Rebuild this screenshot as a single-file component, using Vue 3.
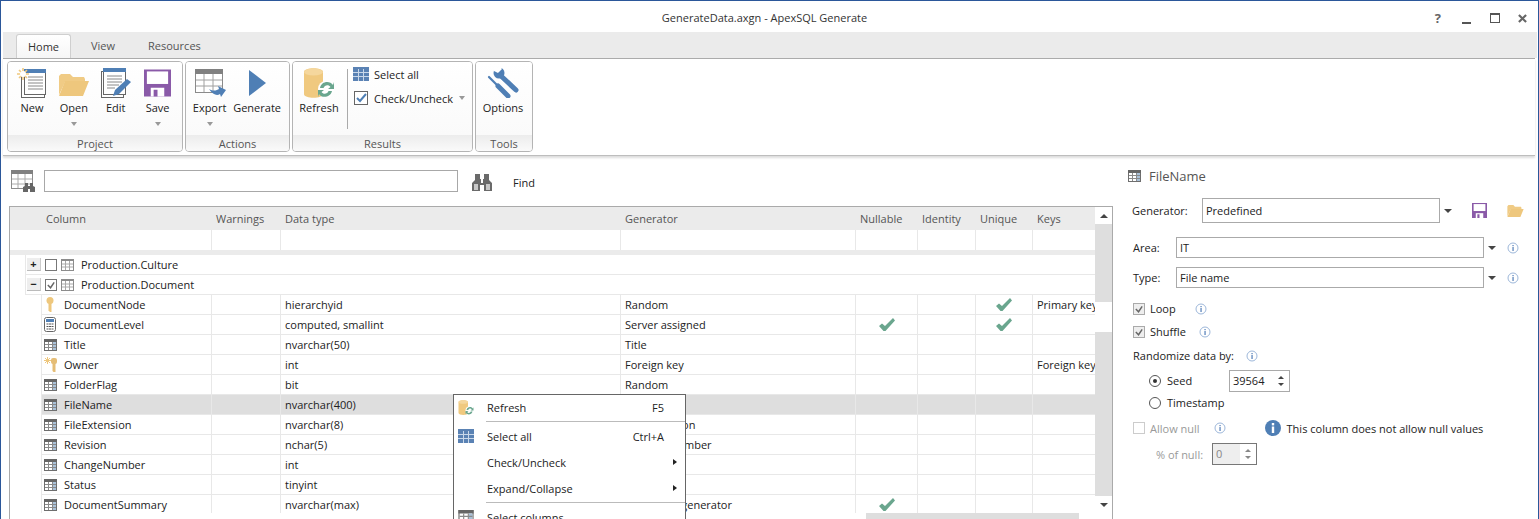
<template>
  <div class="window">
    <svg class="defs" width="0" height="0">
      <defs>
        <symbol id="tbl" viewBox="0 0 13 12">
          <rect x="0.5" y="0.5" width="12" height="11" fill="#fff" stroke="#6e6e6e"/>
          <rect x="0" y="0" width="13" height="3" fill="#666"/>
          <rect x="9" y="3" width="3" height="8" fill="#a9c1d9"/>
          <path d="M4.500 3v8M8.500 3v8M1 5.500h11M1 8.500h11" stroke="#8a8a8a" fill="none"/>
        </symbol>
        <symbol id="tbl-light" viewBox="0 0 13 12">
          <rect x="0.5" y="0.5" width="12" height="11" fill="#fff" stroke="#8c8c8c"/>
          <rect x="0" y="0" width="13" height="2" fill="#8c8c8c"/>
          <path d="M4.500 2v9M8.500 2v9M1 5h11M1 8h11" stroke="#a8a8a8" fill="none"/>
        </symbol>
        <symbol id="check" viewBox="0 0 16 13">
          <polygon points="0,8 3,5.500 6,8 14,0 16,2.500 6.500,13 4.500,13" fill="#6aa68e"/>
        </symbol>
        <symbol id="info" viewBox="0 0 12 12">
          <circle cx="6" cy="6" r="5" fill="#fff" stroke="#9db7da"/>
          <rect x="5.400" y="5" width="1.300" height="4" fill="#5f86bd"/>
          <rect x="5.400" y="3" width="1.300" height="1.200" fill="#5f86bd"/>
        </symbol>
        <symbol id="save" viewBox="0 0 28 28">
          <rect width="28" height="28" fill="#8a5aa8"/>
          <rect x="3" y="2" width="22" height="13" fill="#fff"/>
          <path d="M7 28v-9h14v9z" fill="#fff"/>
          <rect x="10" y="21" width="4" height="7" fill="#8a5aa8"/>
        </symbol>
        <symbol id="folder" viewBox="0 0 30 24">
          <path d="M0 23V4l2-2h9l3 3h11l1 2v3H6z" fill="#f0cb85"/>
          <path d="M0 24 6 9h24l-6 15z" fill="#eec77d"/>
        </symbol>
        <symbol id="grid-blue" viewBox="0 0 16 14">
          <rect width="16" height="14" fill="#5a82b4"/>
          <path d="M5.500 2v12M10.500 2v12M0 5.500h16M0 9.500h16" stroke="#c9d8ea" fill="none"/>
        </symbol>
        <symbol id="refresh" viewBox="0 0 30 30">
          <path d="M0 4c0-5 19-5 19 0v22c0 5-19 5-19 0z" fill="#f0c97f"/>
          <ellipse cx="9.500" cy="4" rx="9.500" ry="3.500" fill="#f5d79d"/>
          <circle cx="22" cy="21" r="8" fill="#fff"/>
          <path d="M16 20c1-7 10-8 13-3l1-3v7h-6l2.500-2c-2-3-6-2-7 1zM28 23c-1 6-10 8-13 3l-1 3v-7h6l-2.500 2c2 3 6 2 7-1z" fill="#6aa68e"/>
        </symbol>
      </defs>
    </svg>

    <div class="titlebar">
      <span class="title">GenerateData.axgn - ApexSQL Generate</span>
      <div class="win-buttons">
        <span class="win-help">?</span>
        <span class="win-min"></span>
        <span class="win-max"></span>
        <svg class="win-close" width="9" height="9" viewBox="0 0 10 10"><path d="M1 1l8 8M9 1l-8 8" stroke="#666" stroke-width="2.400"/></svg>
      </div>
    </div>

    <div class="tabs">
      <span class="tab active">Home</span>
      <span class="tab">View</span>
      <span class="tab">Resources</span>
    </div>

    <div class="ribbon">
      <div class="group project">
        <div class="group-body">
          <div class="rbtn">
            <svg class="ricon" width="30" height="30" viewBox="0 0 30 30">
              <rect x="4.500" y="6.500" width="23" height="23" fill="#fff" stroke="#666"/>
              <rect x="7.500" y="1.500" width="21" height="25" fill="#fff" stroke="#666"/>
              <rect x="7" y="1" width="22" height="4" fill="#4f7fb5"/>
              <path d="M11 9h15M11 12h15M11 15h15M11 18h15M11 21h15" stroke="#888"/>
              <g stroke="#f0c97f" stroke-width="1.600"><path d="M6 0v12M0 6h12M2 2l8 8M10 2l-8 8"/></g>
              <circle cx="6" cy="6" r="3" fill="#fff"/>
            </svg>
            <span>New</span>
          </div>
          <div class="rbtn">
            <svg class="ricon" width="30" height="30" viewBox="0 0 30 30"><use href="#folder" y="4" width="30" height="24"/></svg>
            <span>Open</span>
            <i class="drop"></i>
          </div>
          <div class="rbtn">
            <svg class="ricon" width="30" height="30" viewBox="0 0 30 30">
              <rect x="0.500" y="3.500" width="22" height="26" fill="#fff" stroke="#666"/>
              <rect x="2.500" y="0.500" width="22" height="26" fill="#fff" stroke="#666"/>
              <rect x="2" y="0" width="23" height="4" fill="#4f7fb5"/>
              <path d="M6 8h15M6 11h15M6 14h15M6 17h12M6 20h8" stroke="#888"/>
              <path d="M12 28l2-6L26 11l4 3-12 12z" fill="#4f7fb5"/>
            </svg>
            <span>Edit</span>
          </div>
          <div class="rbtn">
            <svg class="ricon" width="30" height="30" viewBox="0 0 30 30"><use href="#save" x="1" y="1" width="27" height="28"/></svg>
            <span>Save</span>
            <i class="drop"></i>
          </div>
        </div>
        <div class="group-label">Project</div>
      </div>

      <div class="group actions">
        <div class="group-body">
          <div class="rbtn">
            <svg class="ricon" width="32" height="30" viewBox="0 0 32 30">
              <rect x="1.500" y="1.500" width="27" height="23" fill="#fff" stroke="#8a8a8a"/>
              <rect x="1" y="1" width="28" height="5" fill="#808080"/>
              <path d="M10 6v18M19 6v18M2 12h26M2 18h26" stroke="#a0a0a0"/>
              <path d="M15 21c5 3 8 1 10 0l-1-3 8 4-5 7-1-3c-3 2-7 1-11-5z" fill="#4f7fb5"/>
            </svg>
            <span>Export</span>
            <i class="drop"></i>
          </div>
          <div class="rbtn">
            <svg class="ricon" width="30" height="30" viewBox="0 0 30 30"><polygon points="7,2 24,15 7,28" fill="#4f7fb5"/></svg>
            <span>Generate</span>
          </div>
        </div>
        <div class="group-label">Actions</div>
      </div>

      <div class="group results">
        <div class="group-body">
          <div class="rbtn">
            <svg class="ricon" width="30" height="30" viewBox="0 0 30 30"><use href="#refresh" width="30" height="30"/></svg>
            <span>Refresh</span>
          </div>
          <div class="rsep"></div>
          <div class="rstack">
            <div class="rsmall">
              <svg width="16" height="14"><use href="#grid-blue" width="16" height="14"/></svg>
              <span>Select all</span>
            </div>
            <div class="rsmall">
              <svg width="16" height="14" viewBox="0 0 16 14">
                <rect x="1.500" y="0.500" width="13" height="13" fill="#fff" stroke="#666"/>
                <path d="M4 7l3 3 6-7" stroke="#4f7fb5" stroke-width="2" fill="none"/>
              </svg>
              <span>Check/Uncheck</span>
              <i class="drop inline"></i>
            </div>
          </div>
        </div>
        <div class="group-label">Results</div>
      </div>

      <div class="group tools">
        <div class="group-body">
          <div class="rbtn">
            <svg class="ricon" width="32" height="30" viewBox="0 0 32 30">
              <circle cx="12" cy="5" r="5.500" fill="#4f7fb5"/>
              <polygon points="6,-2 12,-3 15,1 11,5 7,3" fill="#fff"/>
              <path d="M13 7l16 15" stroke="#4f7fb5" stroke-width="5" stroke-linecap="round"/>
              <path d="M2 9l9 9" stroke="#4f7fb5" stroke-width="2.200" stroke-linecap="round"/>
              <path d="M11 18l10 10" stroke="#4f7fb5" stroke-width="5" stroke-linecap="round"/>
            </svg>
            <span>Options</span>
          </div>
        </div>
        <div class="group-label">Tools</div>
      </div>
    </div>

    <div class="content">
      <div class="left">
        <div class="find-row">
          <svg width="25" height="23" viewBox="0 0 25 23">
            <rect x="0.500" y="0.500" width="21" height="18" fill="#fff" stroke="#8c8c8c"/>
            <rect x="0" y="0" width="22" height="4" fill="#808080"/>
            <path d="M7 4v14M14 4v14M1 9h20M1 14h20" stroke="#aaa"/>
            <path d="M12 22v-5l2-1v-3h3v3h2v-3h3v3l2 1v5h-5v-3h-2v3z" fill="#666"/>
          </svg>
          <div class="find-input"></div>
          <svg class="binoc" width="20" height="17" viewBox="0 0 20 17">
            <path d="M3 0h5v5h1v4h2V5h1V0h5v6l3 3v8h-8v-6H8v6H0V9l3-3z" fill="#6a6a6a"/>
            <rect x="2" y="10" width="4" height="6" fill="#c8c8c8"/>
            <rect x="14" y="10" width="4" height="6" fill="#c8c8c8"/>
          </svg>
          <span class="find-label">Find</span>
        </div>

        <div class="grid-frame">
          <div class="grid-main">
            <div class="grid-row head">
              <span v-for="h in headers" :key="h" class="cell">{{ h }}</span>
            </div>
            <div class="grid-row filter">
              <span v-for="h in headers" :key="h" class="cell"></span>
            </div>
            <div class="grid-sep"></div>

            <div class="table-row">
              <span class="expander">+</span>
              <span class="cb"></span>
              <svg width="13" height="12"><use href="#tbl-light" width="13" height="12"/></svg>
              <span class="table-name">Production.Culture</span>
            </div>
            <div class="table-row">
              <span class="expander">−</span>
              <span class="cb">
                <svg width="11" height="11" viewBox="0 0 11 11"><path d="M2 5l3 3 4-6" stroke="#666" stroke-width="1.600" fill="none"/></svg>
              </span>
              <svg width="13" height="12"><use href="#tbl-light" width="13" height="12"/></svg>
              <span class="table-name">Production.Document</span>
            </div>

            <div v-for="r in rows" :key="r.name" class="grid-row data" :class="{ selected: r.name === 'FileName' }">
              <span class="cell name">
                <svg v-if="r.icon === 'key'" class="row-icon" width="13" height="15" viewBox="0 0 13 15">
                  <circle cx="6" cy="3.500" r="3.500" fill="#eec77d"/>
                  <path d="M4.500 6h3v9L6 15l-1.500-1.500z" fill="#eec77d"/>
                </svg>
                <svg v-else-if="r.icon === 'fk'" class="row-icon" width="14" height="15" viewBox="0 0 14 15">
                  <g stroke="#eec77d"><path d="M3.500 0v7M0 3.500h7M1 1l5 5M6 1l-5 5"/></g>
                  <rect x="7" y="1" width="6" height="6" rx="2" fill="#e5bd76"/>
                  <path d="M8.500 6h3v9h-2l-1-1z" fill="#e5bd76"/>
                </svg>
                <svg v-else-if="r.icon === 'calc'" class="row-icon" width="13" height="15" viewBox="0 0 13 15">
                  <rect x="0.500" y="0.500" width="11" height="14" rx="2" fill="#fff" stroke="#666"/>
                  <rect x="2" y="2" width="8" height="3" fill="#4f7fb5"/>
                  <path d="M2.500 7h2M5 7h2M7.500 7h2M2.500 9.500h2M5 9.500h2M7.500 9.500h2M2.500 12h2M5 12h2M7.500 12h2" stroke="#555"/>
                </svg>
                <svg v-else class="row-icon" width="13" height="12"><use href="#tbl" width="13" height="12"/></svg>
                <span class="name-text">{{ r.name }}</span>
              </span>
              <span class="cell"></span>
              <span class="cell">{{ r.type }}</span>
              <span class="cell">{{ r.gen }}</span>
              <span class="cell center"><svg v-if="r.nullable" width="16" height="13"><use href="#check" width="16" height="13"/></svg></span>
              <span class="cell"></span>
              <span class="cell center"><svg v-if="r.unique" width="16" height="13"><use href="#check" width="16" height="13"/></svg></span>
              <span class="cell">{{ r.keys }}</span>
            </div>
          </div>

          <div class="vscroll">
            <span class="sb-btn"><i class="tri up"></i></span>
            <span class="sb-thumb first"></span>
            <span class="sb-gap"></span>
            <span class="sb-thumb second"></span>
            <span class="sb-btn"><i class="tri down"></i></span>
          </div>
          <div class="hscroll"></div>

          <div class="menu">
            <div class="menu-item first">
              <svg class="menu-icon" width="16" height="15"><use href="#refresh" width="16" height="15"/></svg>
              <span>Refresh</span><span class="shortcut">F5</span>
            </div>
            <div class="menu-sep"></div>
            <div class="menu-item">
              <svg class="menu-icon" width="16" height="14"><use href="#grid-blue" width="16" height="14"/></svg>
              <span>Select all</span><span class="shortcut">Ctrl+A</span>
            </div>
            <div class="menu-item"><span class="no-icon">Check/Uncheck</span><i class="sub"></i></div>
            <div class="menu-item"><span class="no-icon">Expand/Collapse</span><i class="sub"></i></div>
            <div class="menu-sep"></div>
            <div class="menu-item">
              <svg class="menu-icon" width="16" height="14"><use href="#tbl" width="16" height="14"/></svg>
              <span>Select columns</span>
            </div>
          </div>
        </div>
      </div>

      <div class="right">
        <div class="prop-title">
          <svg width="13" height="12"><use href="#tbl" width="13" height="12"/></svg>
          <span>FileName</span>
        </div>

        <div class="generator-row">
          <span class="gen-label">Generator:</span>
          <div class="box gen-box">Predefined</div>
          <i class="tri down combo"></i>
          <svg class="gen-save" width="15" height="15"><use href="#save" width="15" height="15"/></svg>
          <svg class="gen-open" width="17" height="13"><use href="#folder" width="17" height="13"/></svg>
        </div>

        <div class="combo-row">
          <span class="combo-label">Area:</span>
          <div class="box combo-box">IT</div>
          <i class="tri down combo"></i>
          <svg class="info-after" width="12" height="12"><use href="#info" width="12" height="12"/></svg>
        </div>
        <div class="combo-row">
          <span class="combo-label">Type:</span>
          <div class="box combo-box">File name</div>
          <i class="tri down combo"></i>
          <svg class="info-after" width="12" height="12"><use href="#info" width="12" height="12"/></svg>
        </div>

        <div class="check-row loop">
          <span class="cb">
            <svg width="11" height="11" viewBox="0 0 11 11"><path d="M2 5l3 3 4-6" stroke="#666" stroke-width="1.600" fill="none"/></svg>
          </span>
          <span>Loop</span>
          <svg class="info-gap" width="12" height="12"><use href="#info" width="12" height="12"/></svg>
        </div>
        <div class="check-row shuffle">
          <span class="cb">
            <svg width="11" height="11" viewBox="0 0 11 11"><path d="M2 5l3 3 4-6" stroke="#666" stroke-width="1.600" fill="none"/></svg>
          </span>
          <span>Shuffle</span>
          <svg class="info-gap" width="12" height="12"><use href="#info" width="12" height="12"/></svg>
        </div>
        <div class="check-row random">
          <span>Randomize data by:</span>
          <svg class="info-gap" width="12" height="12"><use href="#info" width="12" height="12"/></svg>
        </div>

        <div class="radio-row seed">
          <span class="radio on"></span>
          <span class="radio-label">Seed</span>
          <div class="spin">
            <span>39564</span>
            <span class="spin-arrows"><i class="tri up small"></i><i class="tri down small"></i></span>
          </div>
        </div>
        <div class="radio-row stamp">
          <span class="radio"></span>
          <span>Timestamp</span>
        </div>

        <div class="check-row allow">
          <span class="cb disabled"></span>
          <span class="muted">Allow null</span>
          <svg class="info-gap" width="12" height="12"><use href="#info" width="12" height="12"/></svg>
          <svg class="big-info" width="16" height="16" viewBox="0 0 16 16">
            <circle cx="8" cy="8" r="8" fill="#4f7fb5"/>
            <rect x="6.800" y="6.500" width="2.400" height="6.500" fill="#fff"/>
            <rect x="6.800" y="3" width="2.400" height="2.400" fill="#fff"/>
          </svg>
          <span>This column does not allow null values</span>
        </div>
        <div class="null-row">
          <span class="muted">% of null:</span>
          <div class="spin disabled">
            <span class="spin-value">0</span>
            <span class="spin-arrows"><i class="tri up small"></i><i class="tri down small"></i></span>
          </div>
        </div>
      </div>
    </div>
  </div>
</template>

<script setup>
const headers = ['Column', 'Warnings', 'Data type', 'Generator', 'Nullable', 'Identity', 'Unique', 'Keys']

const rows = [
  { name: 'DocumentNode', type: 'hierarchyid', gen: 'Random', unique: true, keys: 'Primary key', icon: 'key' },
  { name: 'DocumentLevel', type: 'computed, smallint', gen: 'Server assigned', nullable: true, unique: true, icon: 'calc' },
  { name: 'Title', type: 'nvarchar(50)', gen: 'Title' },
  { name: 'Owner', type: 'int', gen: 'Foreign key', keys: 'Foreign key', icon: 'fk' },
  { name: 'FolderFlag', type: 'bit', gen: 'Random' },
  { name: 'FileName', type: 'nvarchar(400)', gen: 'Predefined' },
  { name: 'FileExtension', type: 'nvarchar(8)', gen: 'File extension' },
  { name: 'Revision', type: 'nchar(5)', gen: 'Revision number' },
  { name: 'ChangeNumber', type: 'int', gen: 'Random' },
  { name: 'Status', type: 'tinyint', gen: 'Random' },
  { name: 'DocumentSummary', type: 'nvarchar(max)', gen: 'Paragraph generator', nullable: true }
]
</script>

<style>
html, body {
  margin: 0;
  background: #fff;
  overflow: hidden;
}
</style>

<style scoped>
.window {
  width: 1539px;
  height: 519px;
  box-sizing: border-box;
  border: 1px solid #2b579a;
  border-bottom: none;
  background: #fff;
  overflow: hidden;
  font-family: "Open Sans", "Noto Sans", sans-serif;
  font-size: 11px;
  color: #222;
}

.defs {
  position: absolute;
}

/* Title bar */
.titlebar {
  height: 31px;
  display: flex;
  align-items: center;
  justify-content: center;
  position: relative;
}

.title {
  font-size: 11px;
  color: #333;
  margin: 1px 10px 0 0;
}

.win-buttons {
  position: absolute;
  right: 0;
  top: 0;
  height: 31px;
}

.win-help {
  position: absolute;
  right: 97px;
  top: 9px;
  font-size: 13px;
  font-weight: 700;
  color: #666;
  line-height: 16px;
}

.win-min {
  position: absolute;
  right: 67px;
  top: 21px;
  width: 9px;
  height: 2px;
  background: #555;
}

.win-max {
  position: absolute;
  right: 38px;
  top: 12px;
  width: 8px;
  height: 7px;
  border: 1px solid #555;
  border-top-width: 2px;
}

.win-close {
  position: absolute;
  right: 11px;
  top: 13px;
}

/* Ribbon */
.tabs {
  height: 26px;
  margin: 0 1px 0 2px;
  background: #ebebeb;
  display: flex;
  align-items: flex-end;
  padding-left: 13px;
}

.tab {
  height: 24px;
  line-height: 24px;
  padding: 0 15px;
  margin-right: 3px;
  color: #555;
}

.tab.active {
  width: 55px;
  box-sizing: border-box;
  text-align: center;
  padding: 0;
  color: #333;
  background: linear-gradient(#fff, #f6f6f6);
  border: 1px solid #cfcfcf;
  border-bottom: none;
  border-radius: 3px 3px 0 0;
  margin-right: 5px;
}

.ribbon {
  height: 94px;
  margin: 0 3px 0 2px;
  padding: 2px 4px 0;
  display: flex;
  gap: 2px;
  border-top: 1px solid #ababab;
  border-bottom: 1px solid #bdbdbd;
  box-shadow: 0 2px 2px #ddd;
  box-sizing: content-box;
  background: #fff;
}

.group {
  height: 91px;
  box-sizing: border-box;
  border: 1px solid #b4b4b4;
  border-radius: 4px;
  display: flex;
  flex-direction: column;
  overflow: hidden;
}

.project { width: 176px; }
.actions { width: 105px; }
.results { width: 181px; }
.tools { width: 58px; }

.group-body {
  flex: 1;
  display: flex;
  justify-content: center;
  background: linear-gradient(#fff, #fafafa);
}

.project .group-body {
  justify-content: flex-start;
  padding-left: 3px;
}

.project .rbtn {
  width: 41.900px;
}

.group-label {
  height: 16px;
  line-height: 18px;
  text-align: center;
  color: #555;
  background: linear-gradient(#ececec, #fafafa);
}

.rbtn {
  width: 42px;
  display: flex;
  flex-direction: column;
  align-items: center;
  padding-top: 6px;
  position: relative;
}

.ricon {
  margin-bottom: 2px;
}

.rbtn span {
  line-height: 16px;
  white-space: nowrap;
}

.drop {
  width: 0;
  height: 0;
  border: 3.500px solid transparent;
  border-top: 4px solid #999;
  border-bottom: none;
  margin-top: 6px;
}

.drop.inline {
  margin: 0 0 0 1px;
}

.actions .group-body {
  padding-right: 8px;
}

.actions .rbtn {
  width: 48px;
}

.rsep {
  width: 1px;
  height: 60px;
  margin: 7px 5px 0 7px;
  background: #aaa;
}

.results .group-body {
  justify-content: flex-start;
  padding-left: 5px;
}

.rstack {
  display: flex;
  flex-direction: column;
  padding-top: 4px;
  gap: 8px;
}

.rsmall {
  display: flex;
  align-items: center;
  gap: 5px;
  height: 16px;
}

.tools .group-body {
  padding-right: 2px;
}

.tools .rbtn {
  width: 54px;
}

/* Main area */
.content {
  display: flex;
  height: 363px;
}

.left {
  width: 1113px;
  flex-shrink: 0;
}

.find-row {
  height: 50px;
  padding: 14px 0 0 10px;
  box-sizing: border-box;
  display: flex;
  align-items: flex-start;
}

.find-input {
  width: 414px;
  height: 22px;
  box-sizing: border-box;
  border: 1px solid #a8a8a8;
  margin-left: 8px;
}

.binoc {
  margin: 4px 0 0 14px;
}

.find-label {
  margin: 5px 0 0 21px;
}

.grid-frame {
  margin-left: 8px;
  width: 1104px;
  height: 320px;
  border: 1px solid #aaa;
  border-bottom: none;
  box-sizing: border-box;
  position: relative;
  display: flex;
}

.grid-main {
  width: 1086px;
  height: 306px;
  overflow: hidden;
}

.grid-row {
  display: grid;
  grid-template-columns: 202px 69px 340px 235px 62px 58px 57px 63px;
  height: 20px;
}

.grid-row .cell {
  padding-left: 4px;
  line-height: 19px;
  white-space: nowrap;
  overflow: hidden;
  box-sizing: border-box;
  border-right: 1px solid #e8e8e8;
  border-bottom: 1px solid #e8e8e8;
}

.head {
  height: 23px;
  background: #ebebeb;
  color: #555;
}

.head .cell {
  border: none;
  line-height: 23px;
}

.grid-row.head .cell {
  border: none;
}

.grid-row.head .cell:first-child {
  padding-left: 36px;
}

.filter .cell {
  border-bottom: none;
}

.grid-row.filter .cell {
  border-bottom: none;
}

.grid-sep {
  height: 5px;
  background: #ebebeb;
}

.table-row {
  height: 20px;
  box-sizing: border-box;
  margin-left: 15px;
  padding-left: 1px;
  display: flex;
  align-items: center;
  border-left: 1px solid #e8e8e8;
  border-bottom: 1px solid #e8e8e8;
}

.expander {
  width: 14px;
  height: 13px;
  line-height: 12px;
  text-align: center;
  font-weight: 700;
  background: #eee;
  border-right: 1px solid #ccc;
  border-bottom: 1px solid #bbb;
  box-sizing: border-box;
  margin-right: 4px;
}

.cb {
  width: 12px;
  height: 12px;
  box-sizing: border-box;
  border: 1px solid #777;
  background: #fff;
  margin-right: 4px;
  display: inline-flex;
  flex-shrink: 0;
}

.table-name {
  margin-left: 7px;
}

.grid-row.data .cell.name {
  margin-left: 31px;
  width: 171px;
  display: flex;
  align-items: center;
  padding-left: 2px;
  border-left: 1px solid #e8e8e8;
}

.row-icon {
  flex-shrink: 0;
}

.name-text {
  position: absolute;
  margin-left: 20px;
}

.grid-row.data .cell.center {
  display: flex;
  align-items: center;
  justify-content: center;
  padding: 0;
}

.selected .cell {
  background: #dedede;
}

.vscroll {
  width: 17px;
  height: 306px;
  display: flex;
  flex-direction: column;
}

.sb-btn {
  height: 17px;
  display: flex;
  align-items: center;
  justify-content: center;
  flex-shrink: 0;
}

.sb-thumb {
  background: #dedede;
}

.sb-thumb.first { height: 78px; }
.sb-gap { height: 30px; }
.sb-thumb.second { flex: 1; }

.tri {
  width: 0;
  height: 0;
  display: block;
  border: 4px solid transparent;
}

.tri.up {
  border-top: none;
  border-bottom: 4px solid #444;
}

.tri.down {
  border-bottom: none;
  border-top: 4px solid #444;
}

.tri.small {
  border-width: 3px;
}

.tri.small.up { border-top: none; }
.tri.small.down { border-bottom: none; }

.hscroll {
  position: absolute;
  left: 856px;
  top: 306px;
  width: 213px;
  height: 8px;
  background: #dedede;
}

/* Context menu */
.menu {
  position: absolute;
  left: 443px;
  top: 187px;
  width: 233px;
  background: #fff;
  border: 1px solid #666;
  box-sizing: border-box;
  z-index: 2;
}

.menu-item {
  height: 26px;
  display: flex;
  align-items: center;
  position: relative;
}

.menu-item.first {
  height: 25px;
}

.menu-icon {
  margin-left: 4px;
  width: 16px;
  flex-shrink: 0;
  margin-right: 13px;
}

.no-icon {
  margin-left: 33px;
}

.shortcut {
  position: absolute;
  right: 21px;
}

.sub {
  position: absolute;
  right: 8px;
  width: 0;
  height: 0;
  border: 3.500px solid transparent;
  border-left: 4px solid #222;
  border-right: none;
}

.menu-sep {
  height: 1px;
  margin: 1px 0 1px 32px;
  background: #bbb;
}

/* Properties panel */
.right {
  flex: 1;
  padding: 0 0 0 14px;
  min-width: 0;
  position: relative;
}

.prop-title {
  height: 24px;
  margin-top: 8px;
  display: flex;
  align-items: center;
  gap: 8px;
  font-size: 13px;
  color: #555;
}

.generator-row {
  display: flex;
  align-items: center;
  height: 25px;
  margin-top: 10px;
  padding-left: 4px;
}

.gen-label {
  width: 70px;
}

.box {
  height: 100%;
  box-sizing: border-box;
  border: 1px solid #aaa;
  padding-left: 3px;
  display: flex;
  align-items: center;
}

.gen-box {
  width: 238px;
}

.tri.combo {
  margin-left: 4px;
}

.gen-save {
  margin-left: 20px;
}

.gen-open {
  margin-left: 20px;
}

.combo-row {
  display: flex;
  align-items: center;
  height: 21px;
  margin-bottom: 9px;
  padding-left: 5px;
}

.generator-row + .combo-row {
  margin-top: 14px;
}

.combo-label {
  width: 43px;
}

.combo-box {
  width: 308px;
  height: 21px;
}

.info-after {
  margin-left: 11px;
}

.check-row {
  display: flex;
  align-items: center;
  height: 23px;
  padding-left: 5px;
}

.check-row.loop {
  margin-top: 9px;
}

.check-row .cb {
  border-color: #aaa;
  background: #eee;
  margin-right: 5px;
}

.check-row .cb.disabled {
  border-color: #ccc;
  background: #fff;
}

.info-gap {
  margin-left: 14px;
}

.loop .info-gap {
  margin-left: 19px;
}

.shuffle .info-gap {
  margin-left: 13px;
}

.random .info-gap {
  margin-left: 12px;
}

.random {
  height: 25px;
}

.radio-row {
  display: flex;
  align-items: center;
  padding-left: 21px;
}

.radio-row.seed {
  height: 23px;
  margin-top: 1px;
}

.radio-row.stamp {
  height: 21px;
}

.radio {
  width: 12px;
  height: 12px;
  box-sizing: border-box;
  border: 1px solid #555;
  border-radius: 50%;
  margin-right: 6px;
  position: relative;
}

.radio.on::after {
  content: "";
  position: absolute;
  left: 3px;
  top: 3px;
  width: 4px;
  height: 4px;
  border-radius: 50%;
  background: #333;
}

.radio-label {
  width: 62px;
}

.spin {
  width: 61px;
  height: 22px;
  box-sizing: border-box;
  border: 1px solid #aaa;
  padding-left: 3px;
  display: flex;
  align-items: center;
  justify-content: space-between;
}

.spin-arrows {
  display: flex;
  flex-direction: column;
  gap: 4px;
  margin-right: 5px;
}

.allow {
  margin-top: 2px;
  height: 26px;
}

.big-info {
  margin: 0 6px 0 39px;
}

.muted {
  color: #999;
}

.null-row {
  display: flex;
  align-items: center;
  height: 22px;
  padding-left: 28px;
  margin-top: 2px;
  gap: 9px;
}

.spin.disabled {
  width: 45px;
  padding-left: 0;
  border-color: #777;
}

.spin-value {
  width: 27px;
  height: 100%;
  background: #eee;
  color: #888;
  padding-left: 3px;
  box-sizing: border-box;
  line-height: 20px;
}

.spin.disabled .tri.up { border-bottom-color: #888; }
.spin.disabled .tri.down { border-top-color: #888; }
</style>
